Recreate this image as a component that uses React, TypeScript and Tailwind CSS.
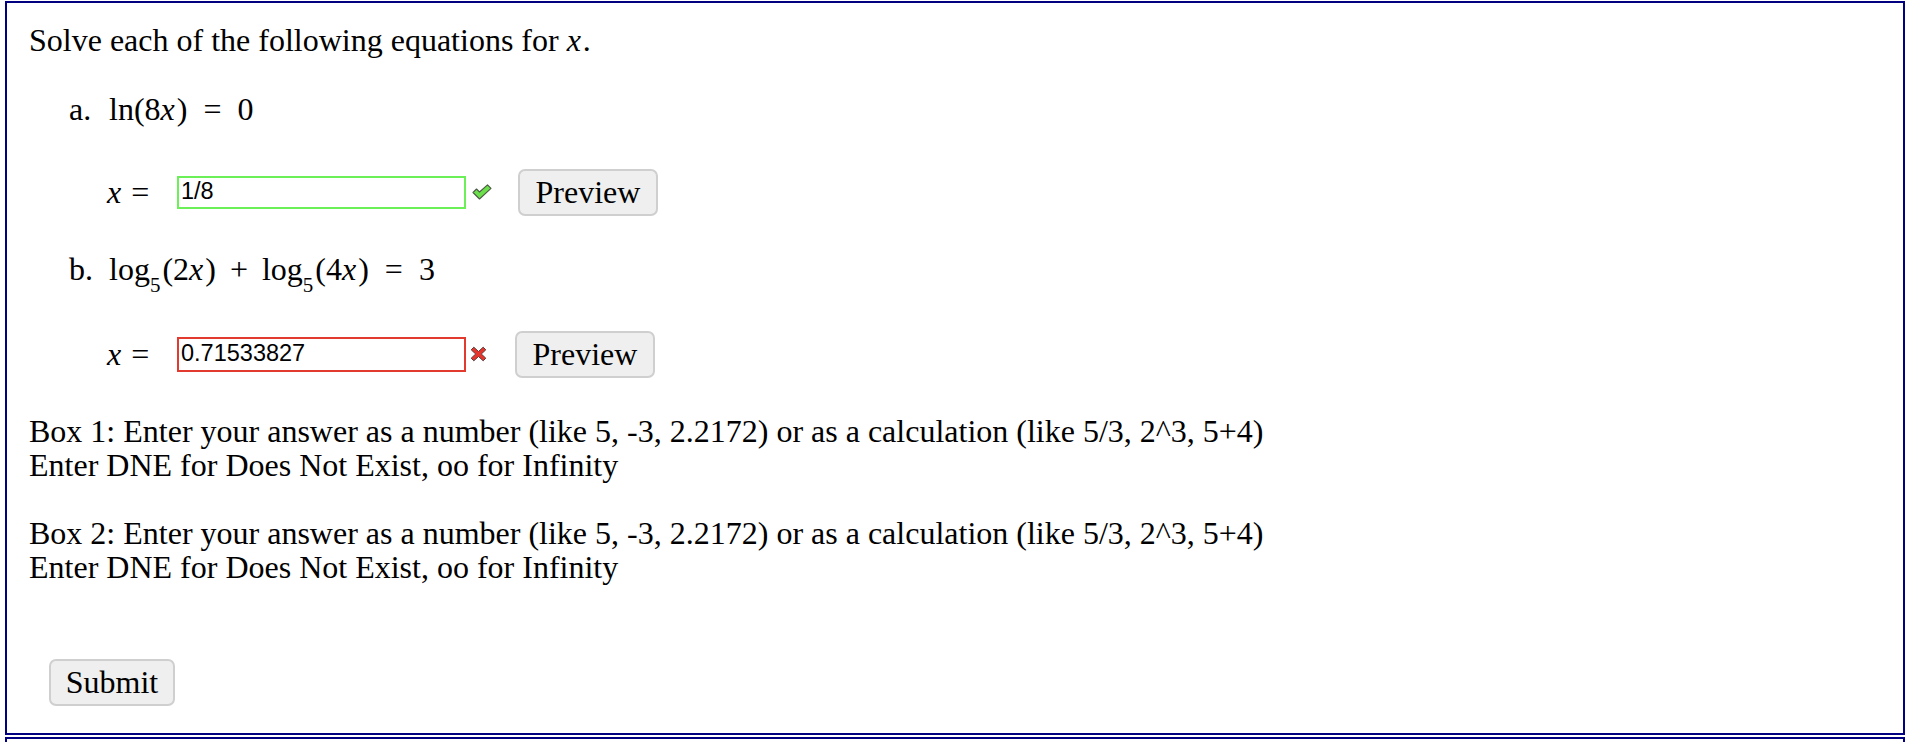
import React from 'react';

const serif = "font-['Liberation_Serif',serif]";

function X() {
  return <span className="italic pr-[2px]">x</span>;
}

function CheckIcon() {
  return (
    <svg width="20" height="16" viewBox="0 0 20 16" className="shrink-0">
      <path
        d="M1 8.5 L4.5 5 L7.5 8 L15.5 0.8 L19 4.3 L7.5 15 Z"
        fill="#6be04a"
        stroke="#4d5b47"
        strokeWidth="1.1"
        strokeLinejoin="round"
      />
    </svg>
  );
}

function CrossIcon() {
  return (
    <svg width="17" height="16" viewBox="0 0 17 16" className="shrink-0">
      <path
        d="M1.2 3.8 L3.8 1.2 L8.5 5.5 L13.2 1.2 L15.8 3.8 L11.3 8 L15.8 12.2 L13.2 14.8 L8.5 10.5 L3.8 14.8 L1.2 12.2 L5.7 8 Z"
        fill="#e8352b"
        stroke="#5a3a38"
        strokeWidth="1"
        strokeLinejoin="round"
      />
    </svg>
  );
}

function Button({ label, className }: { label: string; className?: string }) {
  return (
    <button
      className={`h-[47px] rounded-[7px] border-2 border-[#cfcfcf] bg-[#efefef] text-[32px] leading-none text-black ${serif} ${className ?? ''}`}
    >
      {label}
    </button>
  );
}

function AnswerRow({ value, ok }: { value: string; ok: boolean }) {
  return (
    <div className="flex items-center pl-[78px]">
      <span className="text-[32px] w-[70px]">
        <X /> =
      </span>
      <input
        readOnly
        value={value}
        className={`w-[289px] border-2 bg-white px-[2px] text-[23.5px] text-black outline-none font-['Liberation_Sans',sans-serif] ${
          ok ? 'h-[33px] border-[#6cf057]' : 'h-[35px] border-[#e23a2e]'
        }`}
      />
      {ok ? (
        <>
          <span className="ml-[6px]"><CheckIcon /></span>
          <Button label="Preview" className="ml-[26px] w-[140px]" />
        </>
      ) : (
        <>
          <span className="ml-[4px]"><CrossIcon /></span>
          <Button label="Preview" className="ml-[28px] w-[140px]" />
        </>
      )}
    </div>
  );
}

function Log5({ arg }: { arg: string }) {
  return (
    <span>
      log<sub className="text-[21px] align-[-7px] leading-none pr-[2px]">5</sub>({arg}
      <X />)
    </span>
  );
}

export default function App() {
  return (
    <div className={`bg-white pt-[1px] px-[5px] text-black ${serif}`}>
      <div className="h-[734px] border-2 border-[#000080] pl-[22px] text-[32px]">
        {/* Title */}
        <div className="flex h-[74px] items-center">
          <span>
            Solve each of the following equations for <X />.
          </span>
        </div>

        {/* Part a */}
        <div className="flex h-[63px] items-center pl-[40px]">
          <span className="w-[40px]">a.</span>
          <span className="text-[32px]">
            ln(8<X />) <span className="mx-[8px]">=</span> 0
          </span>
        </div>
        <div className="flex h-[104px] items-center">
          <AnswerRow value="1/8" ok={true} />
        </div>

        {/* Part b */}
        <div className="flex h-[50px] items-center pl-[40px]">
          <span className="w-[40px]">b.</span>
          <span className="text-[32px]">
            <Log5 arg="2" /> <span className="mx-[6px]">+</span> <Log5 arg="4" />{' '}
            <span className="mx-[8px]">=</span> 3
          </span>
        </div>
        <div className="flex h-[120px] items-center">
          <AnswerRow value="0.71533827" ok={false} />
        </div>

        {/* Instructions */}
        <div className="leading-[34px]">
          <p>Box 1: Enter your answer as a number (like 5, -3, 2.2172) or as a calculation (like 5/3, 2^3, 5+4)</p>
          <p>Enter DNE for Does Not Exist, oo for Infinity</p>
        </div>
        <div className="mt-[34px] leading-[34px]">
          <p>Box 2: Enter your answer as a number (like 5, -3, 2.2172) or as a calculation (like 5/3, 2^3, 5+4)</p>
          <p>Enter DNE for Does Not Exist, oo for Infinity</p>
        </div>

        <div className="mt-[74px] pl-[20px]">
          <Button label="Submit" className="w-[126px]" />
        </div>
      </div>
      <div className="mt-[2px] h-[20px] border-2 border-b-0 border-[#000080]" />
    </div>
  );
}
